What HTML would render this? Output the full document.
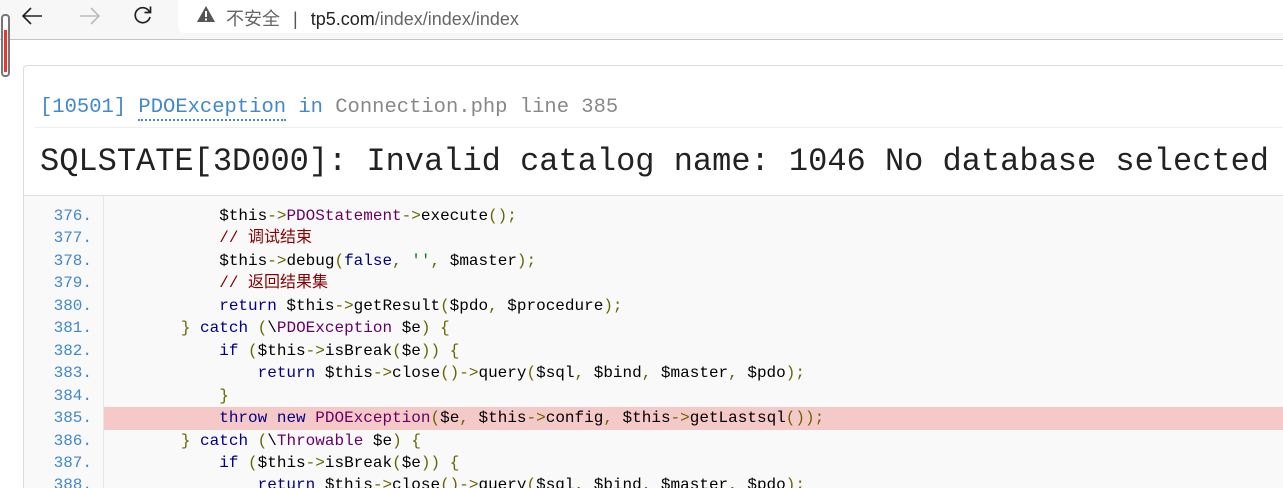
<!DOCTYPE html>
<html><head><meta charset="utf-8">
<style>
*{margin:0;padding:0;box-sizing:border-box}
html,body{width:1283px;height:488px;overflow:hidden}
body{background:#fff;position:relative;font-family:"Liberation Sans","Noto Sans CJK SC",sans-serif}
.bar{position:absolute;left:0;top:0;width:1283px;height:40px;background:#f7f7f7;border-bottom:1px solid #c4c4c4}
.addr{position:absolute;left:178px;top:0;width:1105px;height:33px;background:#fff;border-radius:0 0 0 6px}
.url{position:absolute;left:226px;top:5px;font-size:18px;color:#666;white-space:nowrap}
.url b{font-weight:normal;color:#222}
.scroll{position:absolute;left:1px;top:14px;width:9px;height:63px;border:2px solid #777;border-radius:4px;background:#fff}
.scroll i{position:absolute;left:1px;top:14px;width:3px;height:42px;background:#e33}
.card{position:absolute;left:23px;top:65px;width:1280px;height:423px;border:1px solid #ddd;border-right:0;border-bottom:0;border-radius:4px 0 0 0;background:#fff}
.mono{font-family:"Liberation Mono","Noto Sans CJK SC",monospace}
.h1{position:absolute;left:40px;top:96px;font-size:20.5px;color:#888;white-space:nowrap}
.h1 .b{color:#4288ce}
.h1 u{text-decoration:none;border-bottom:2px dotted #4288ce}
.sep{position:absolute;left:35px;top:127px;width:1248px;height:1px;background:#eee}
.h2{position:absolute;left:40px;top:143px;font-size:32px;color:#222;white-space:nowrap}
.code{position:absolute;left:24px;top:195px;width:1259px;height:293px;background:#f9f9f9;border-top:1px solid #ddd}
.gut{position:absolute;left:103px;top:196px;width:1px;height:292px;background:#e6e6e6}
.lines{position:absolute;left:0;top:205px;width:1283px;height:283px;overflow:hidden;font-size:16px;line-height:22.45px;white-space:pre}
.ln{position:absolute;left:24px;width:68px;text-align:right;color:#4288ce}
.cd{position:absolute;left:104px;width:1179px;color:#000}
.hl{background:#f6c9c9}
.k{color:#008}.t{color:#606}.p{color:#660}.c{color:#800}.s{color:#080}
</style></head><body>
<div class="bar">
<svg style="position:absolute;left:20px;top:5px" width="26" height="22" viewBox="0 0 26 22"><path d="M22 11H4M11 3L3 11l8 8" fill="none" stroke="#222" stroke-width="1.6"/></svg>
<svg style="position:absolute;left:76px;top:5px" width="26" height="22" viewBox="0 0 26 22"><path d="M4 11h18M15 3l8 8-8 8" fill="none" stroke="#bbb" stroke-width="1.6"/></svg>
<svg style="position:absolute;left:131px;top:3px" width="24" height="24" viewBox="0 0 24 24"><path d="M18.5 9A7.5 7.5 0 1 0 19 14" fill="none" stroke="#222" stroke-width="1.7"/><path d="M19.5 3.5V9.5H13.5" fill="none" stroke="#222" stroke-width="1.7"/></svg>
<div class="addr"></div>
<svg style="position:absolute;left:196px;top:5px" width="20" height="18" viewBox="0 0 20 18"><path d="M10 1L19 17H1Z" fill="#555"/><rect x="9" y="6" width="2" height="6" fill="#fff"/><rect x="9" y="13.5" width="2" height="2" fill="#fff"/></svg>
<div class="url">不安全 <span style="color:#555;margin:0 8px">|</span> <b>tp5.com</b>/index/index/index</div>
</div>
<div class="scroll"><i></i></div>
<div class="card"></div>
<div class="h1 mono"><span class="b">[10501] <u>PDOException</u> in</span> Connection.php line 385</div>
<div class="sep"></div>
<div class="h2 mono">SQLSTATE[3D000]: Invalid catalog name: 1046 No database selected</div>
<div class="code"></div>
<div class="gut"></div>
<div class="lines mono">
<div class="ln" style="top:0">376.
377.
378.
379.
380.
381.
382.
383.
384.
385.
386.
387.
388.</div>
<div class="cd" style="top:0"><div>            $this<span class="p">-&gt;</span><span class="t">PDOStatement</span><span class="p">-&gt;</span>execute<span class="p">();</span></div><div class="c">            // 调试结束</div><div>            $this<span class="p">-&gt;</span>debug<span class="p">(</span><span class="k">false</span><span class="p">,</span> <span class="s">''</span><span class="p">,</span> $master<span class="p">);</span></div><div class="c">            // 返回结果集</div><div>            <span class="k">return</span> $this<span class="p">-&gt;</span>getResult<span class="p">(</span>$pdo<span class="p">,</span> $procedure<span class="p">);</span></div><div>        <span class="p">}</span> <span class="k">catch</span> <span class="p">(</span>\<span class="t">PDOException</span> $e<span class="p">)</span> <span class="p">{</span></div><div>            <span class="k">if</span> <span class="p">(</span>$this<span class="p">-&gt;</span>isBreak<span class="p">(</span>$e<span class="p">))</span> <span class="p">{</span></div><div>                <span class="k">return</span> $this<span class="p">-&gt;</span>close<span class="p">()-&gt;</span>query<span class="p">(</span>$sql<span class="p">,</span> $bind<span class="p">,</span> $master<span class="p">,</span> $pdo<span class="p">);</span></div><div>            <span class="p">}</span></div><div class="hl">            <span class="k">throw</span> <span class="k">new</span> <span class="t">PDOException</span><span class="p">(</span>$e<span class="p">,</span> $this<span class="p">-&gt;</span>config<span class="p">,</span> $this<span class="p">-&gt;</span>getLastsql<span class="p">());</span></div><div>        <span class="p">}</span> <span class="k">catch</span> <span class="p">(</span>\<span class="t">Throwable</span> $e<span class="p">)</span> <span class="p">{</span></div><div>            <span class="k">if</span> <span class="p">(</span>$this<span class="p">-&gt;</span>isBreak<span class="p">(</span>$e<span class="p">))</span> <span class="p">{</span></div><div>                <span class="k">return</span> $this<span class="p">-&gt;</span>close<span class="p">()-&gt;</span>query<span class="p">(</span>$sql<span class="p">,</span> $bind<span class="p">,</span> $master<span class="p">,</span> $pdo<span class="p">);</span></div></div>
</div>
</body></html>
